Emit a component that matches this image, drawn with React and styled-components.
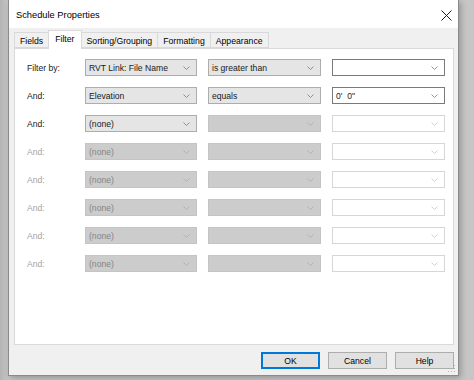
import React from 'react';
import styled, { createGlobalStyle } from 'styled-components';

const GlobalStyle = createGlobalStyle`
    html, body {
        margin: 0;
        padding: 0;
        background: #c4c4c4;
    }
    body {
        font-family: 'Liberation Sans', Arial, sans-serif;
        color: #1a1a1a;
    }
`;

const fields = ['RVT Link: File Name', 'Elevation', '(none)', '(none)', '(none)', '(none)', '(none)', '(none)'];
const conditions = ['is greater than', 'equals', '', '', '', '', '', ''];
const values = ['', "0'  0\"", '', '', '', '', '', ''];

function Chevron({ color }) {
    return (
        <svg width="7" height="4" viewBox="0 0 7 4">
            <polyline points="0.5,0.5 3.5,3.5 6.5,0.5" fill="none" stroke={color} strokeWidth="0.8" />
        </svg>
    );
}

function Dropdown({ variant, text }) {
    const chevronColor = {
        enabled: '#7a7a7a',
        disabled: '#ababab',
        input: '#7a7a7a',
        inputOff: '#c6c6c6'
    }[variant];

    return (
        <Select variant={variant}>
            <span>{text}</span>
            <Chevron color={chevronColor} />
        </Select>
    );
}

function App() {
    return (
        <>
            <GlobalStyle />
            <Screen>
                <Window>
                    <TitleBar>
                        <span>Schedule Properties</span>
                        <svg width="11" height="11" viewBox="0 0 11 11">
                            <path d="M0.5 0.5 L10.5 10.5 M10.5 0.5 L0.5 10.5" stroke="#222" strokeWidth="1" />
                        </svg>
                    </TitleBar>
                    <Body>
                        <TabStrip>
                            <Tab>Fields</Tab>
                            <Tab active>Filter</Tab>
                            <Tab>Sorting/Grouping</Tab>
                            <Tab>Formatting</Tab>
                            <Tab>Appearance</Tab>
                        </TabStrip>
                        <Panel>
                            <FilterGrid>
                                {fields.map((field, i) => {
                                    // first three rows are editable, the rest are greyed out
                                    const fieldOn = i < 3;
                                    const condOn = i < 2;
                                    return (
                                        <React.Fragment key={i}>
                                            <Label disabled={!fieldOn}>{i === 0 ? 'Filter by:' : 'And:'}</Label>
                                            <Dropdown variant={fieldOn ? 'enabled' : 'disabled'} text={field} />
                                            <Dropdown variant={condOn ? 'enabled' : 'disabled'} text={conditions[i]} />
                                            <Dropdown variant={condOn ? 'input' : 'inputOff'} text={values[i]} />
                                        </React.Fragment>
                                    );
                                })}
                            </FilterGrid>
                        </Panel>
                        <ButtonRow>
                            <Button primary>OK</Button>
                            <Button>Cancel</Button>
                            <Button>Help</Button>
                        </ButtonRow>
                    </Body>
                    <Grip>
                        <svg width="8" height="8" viewBox="0 0 8 8">
                            <g fill="#b0b0b0">
                                <rect x="6" y="0" width="1" height="1" />
                                <rect x="3" y="3" width="1" height="1" />
                                <rect x="6" y="3" width="1" height="1" />
                                <rect x="0" y="6" width="1" height="1" />
                                <rect x="3" y="6" width="1" height="1" />
                                <rect x="6" y="6" width="1" height="1" />
                            </g>
                        </svg>
                    </Grip>
                </Window>
            </Screen>
        </>
    );
}

const Screen = styled.div`
    width: 474px;
    height: 380px;
    display: flex;
    align-items: flex-start;
    padding-left: 8px;
    box-sizing: border-box;
    background: linear-gradient(to right, #b4b4b4 0px, #c6c6c6 8px);
    overflow: hidden;
`;

const Window = styled.div`
    position: relative;
    width: 451px;
    height: 376px;
    box-sizing: border-box;
    background: #f0f0f0;
    border: 1px solid #8a8a8a;
    border-top: none;
    box-shadow: 2px 2px 6px rgba(0, 0, 0, 0.25);
    display: flex;
    flex-direction: column;
`;

const TitleBar = styled.div`
    height: 28px;
    flex-shrink: 0;
    background: #ffffff;
    display: flex;
    align-items: center;
    justify-content: space-between;
    padding: 2px 6px 0 7px;
    box-sizing: border-box;
    font-size: 9.3px;
    color: #000;
`;

const Body = styled.div`
    flex: 1;
    display: flex;
    flex-direction: column;
    padding: 2px 4px 0 5px;
`;

const TabStrip = styled.div`
    display: flex;
    align-items: flex-end;
    height: 18px;
`;

const Tab = styled.div`
    height: ${p => (p.active ? '19px' : '16px')};
    margin-bottom: ${p => (p.active ? '-1px' : '0')};
    box-sizing: border-box;
    padding: ${p => (p.active ? '2px 6px 0' : '2px 5px 0')};
    background: ${p => (p.active ? '#ffffff' : '#f0f0f0')};
    border: 1px solid #d9d9d9;
    border-bottom: ${p => (p.active ? 'none' : '1px solid #d9d9d9')};
    margin-left: -1px;
    font-size: 8.7px;
    line-height: 12px;
    color: #000;
    position: relative;
    z-index: ${p => (p.active ? 1 : 0)};

    &:first-child {
        margin-left: 0;
    }
`;

const Panel = styled.div`
    height: 297px;
    box-sizing: border-box;
    background: #ffffff;
    border: 1px solid #d9d9d9;
    padding: 10px 8px 0 12px;
`;

const FilterGrid = styled.div`
    display: grid;
    grid-template-columns: 47px 112px 113px 113px;
    grid-auto-rows: 17px;
    column-gap: 11px;
    row-gap: 11px;
    align-items: center;
`;

const Label = styled.div`
    font-size: 8.6px;
    color: ${p => (p.disabled ? '#a3a3a3' : '#1a1a1a')};
`;

const selectColors = {
    enabled: { bg: '#e5e5e5', border: '#adadad', text: '#1a1a1a' },
    disabled: { bg: '#cccccc', border: '#c4c4c4', text: '#858585' },
    input: { bg: '#ffffff', border: '#7a7a7a', text: '#1a1a1a' },
    inputOff: { bg: '#ffffff', border: '#d6d6d6', text: '#858585' }
};

const Select = styled.div`
    height: 17px;
    box-sizing: border-box;
    display: flex;
    align-items: center;
    justify-content: space-between;
    padding: 0 6px 0 3px;
    background: ${p => selectColors[p.variant].bg};
    border: 1px solid ${p => selectColors[p.variant].border};
    color: ${p => selectColors[p.variant].text};
    font-size: 8.6px;
    white-space: pre;
`;

const ButtonRow = styled.div`
    display: flex;
    justify-content: flex-end;
    gap: 8px;
    padding: 7px 0 0;
`;

const Button = styled.div`
    width: 59px;
    height: 17px;
    box-sizing: border-box;
    display: flex;
    align-items: center;
    justify-content: center;
    background: #e1e1e1;
    border: 1px solid ${p => (p.primary ? '#0078d7' : '#adadad')};
    box-shadow: ${p => (p.primary ? 'inset 0 0 0 1px #0078d7' : 'none')};
    font-size: 8.6px;
    color: #000;
`;

const Grip = styled.div`
    position: absolute;
    right: 2px;
    bottom: 2px;
    width: 8px;
    height: 8px;
    display: flex;
`;

export default App;
